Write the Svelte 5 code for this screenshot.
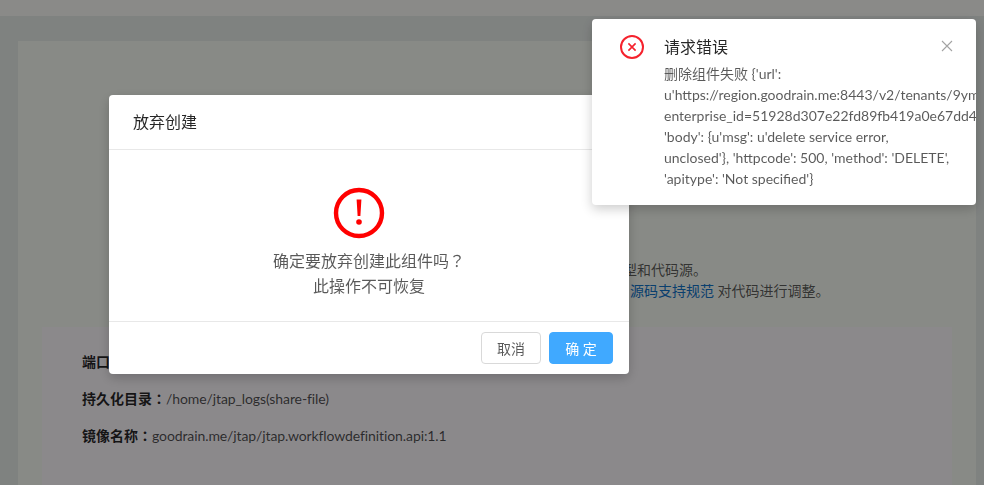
<script lang="ts">
  const errorLines = [
    "删除组件失败 {'url':",
    "u'https://region.goodrain.me:8443/v2/tenants/9ymjtap/services/jtap_workflow/",
    "enterprise_id=51928d307e22fd89fb419a0e67dd42e7',",
    "'body': {u'msg': u'delete service error,",
    "unclosed'}, 'httpcode': 500, 'method': 'DELETE',",
    "'apitype': 'Not specified'}",
  ];
</script>

<div class="page">
  <div class="top-band"></div>
  <main class="card">
    <div class="intro">
      <p>应用构建源检测未通过，请根据提示检查并确认代码类型和代码源。</p>
      <p>如果您的代码确实存在问题导致构建失败，请先查阅并参考平台提供的文档 <a href="#docs">源码支持规范</a> 对代码进行调整。</p>
    </div>
    <section class="details">
      <p><b>端口<span class="punct">：</span></b>8080</p>
      <p><b>持久化目录<span class="punct">：</span></b>/home/jtap_logs(share-file)</p>
      <p><b>镜像名称<span class="punct">：</span></b>goodrain.me/jtap/jtap.workflowdefinition.api:1.1</p>
    </section>
  </main>
</div>

<div class="mask">
  <div class="modal">
    <header class="modal-header">放弃创建</header>
    <div class="modal-body">
      <svg class="warn-icon" width="52" height="52" viewBox="0 0 52 52">
        <circle cx="26" cy="26" r="23" fill="none" stroke="#f00" stroke-width="4.4" />
        <path d="M23.6 12.5h4.8l-1 16.5h-2.8z" fill="#f00" />
        <circle cx="26" cy="35" r="2.8" fill="#f00" />
      </svg>
      <p>确定要放弃创建此组件吗<span class="punct">？</span></p>
      <p>此操作不可恢复</p>
    </div>
    <footer class="modal-footer">
      <button class="btn">取消</button>
      <button class="btn primary">确 定</button>
    </footer>
  </div>
</div>

<div class="notice">
  <svg class="error-icon" width="24" height="24" viewBox="0 0 24 24">
    <circle cx="12" cy="12" r="11" fill="none" stroke="#f5222d" stroke-width="2" />
    <path d="M8.4 8.4l7.2 7.2M15.6 8.4l-7.2 7.2" fill="none" stroke="#f5222d" stroke-width="1.6" />
  </svg>
  <div class="notice-text">
    <div class="notice-title">请求错误</div>
    {#each errorLines as line}
      <div class="notice-line">{line}</div>
    {/each}
  </div>
  <svg class="close-icon" width="12" height="12" viewBox="0 0 12 12">
    <path d="M1 1l10 10M11 1L1 11" fill="none" stroke="#a3a3a3" stroke-width="1.1" />
  </svg>
</div>

<style>
  :global(body) {
    margin: 0;
    font-family: Lato, "Noto Sans CJK SC", sans-serif;
    font-size: 14px;
    line-height: 1.5;
    color: rgba(0, 0, 0, 0.65);
  }

  p {
    margin: 0;
  }

  .punct {
    font-family: "Noto Sans CJK TC", sans-serif;
  }

  .page {
    height: 485px;
    overflow: hidden;
    background: #e8edea;
    padding: 0 8px 0 18px;
  }

  .top-band {
    height: 16px;
    margin: 0 -8px 25px -18px;
    background: #fbfcf8;
  }

  .card {
    height: 444px;
    padding: 218px 24px 0;
    background: #f8fbf4;
    box-sizing: border-box;
  }

  .intro {
    text-align: center;
    color: rgba(0, 0, 0, 0.65);
  }

  .intro a {
    color: #1173c9;
    text-decoration: none;
  }

  .details {
    margin-top: 26px;
    height: 200px;
    padding: 24px 40px;
    background: #fdf9fe;
    color: rgba(0, 0, 0, 0.7);
    letter-spacing: -0.1px;
  }

  .details p {
    margin-bottom: 16px;
  }

  .details b {
    color: rgba(0, 0, 0, 0.85);
    letter-spacing: 0;
  }

  .mask {
    position: fixed;
    inset: 0;
    background: rgba(0, 0, 0, 0.45);
    padding: 95px 0 0 109px;
    box-sizing: border-box;
  }

  .modal {
    width: 520px;
    background: #fff;
    border-radius: 4px;
    box-shadow: 0 4px 12px rgba(0, 0, 0, 0.2);
  }

  .modal-header {
    height: 55px;
    padding: 16px 24px;
    box-sizing: border-box;
    font-size: 16px;
    line-height: 22px;
    color: rgba(0, 0, 0, 0.85);
    border-bottom: 1px solid #e8e8e8;
  }

  .modal-body {
    height: 171px;
    padding-top: 37px;
    box-sizing: border-box;
    text-align: center;
    font-size: 16px;
    line-height: 25px;
  }

  .warn-icon {
    display: block;
    margin: 0 auto 9px;
    transform: translateX(-10px);
  }

  .modal-footer {
    height: 53px;
    padding: 10px 16px;
    box-sizing: border-box;
    display: flex;
    justify-content: flex-end;
    gap: 8px;
    border-top: 1px solid #e8e8e8;
  }

  .btn {
    height: 32px;
    padding: 0;
    width: 60px;
    font: inherit;
    color: rgba(0, 0, 0, 0.65);
    background: #fff;
    border: 1px solid #d9d9d9;
    border-radius: 4px;
  }

  .btn.primary {
    width: 64px;
    color: #fff;
    background: #40a9ff;
    border-color: #40a9ff;
  }

  .notice {
    position: fixed;
    top: 19px;
    right: 8px;
    width: 384px;
    height: 186px;
    box-sizing: border-box;
    padding: 16px 24px;
    display: flex;
    overflow: hidden;
    background: #fff;
    border-radius: 4px;
    box-shadow: 0 4px 12px rgba(0, 0, 0, 0.2);
  }

  .error-icon {
    flex: none;
    margin: 0 20px 0 4px;
  }

  .notice-text {
    flex: 1;
    min-width: 0;
  }

  .notice-title {
    font-size: 16px;
    line-height: 24px;
    color: rgba(0, 0, 0, 0.85);
    margin-bottom: 4px;
  }

  .notice-line {
    white-space: nowrap;
    line-height: 21px;
  }

  .close-icon {
    position: absolute;
    top: 21px;
    right: 23px;
  }
</style>
